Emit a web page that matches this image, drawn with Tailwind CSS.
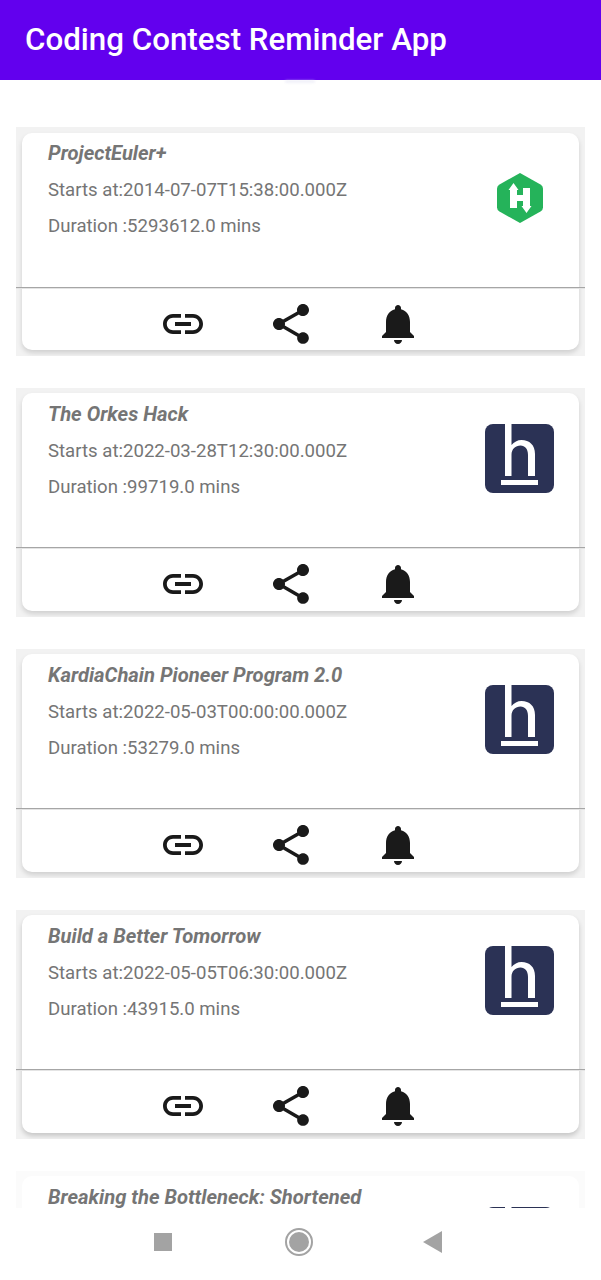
<!DOCTYPE html>
<html>
<head>
    <meta charset="utf-8">
    <title>Coding Contest Reminder App</title>
    <script src="https://cdn.jsdelivr.net/npm/@tailwindcss/browser@4"></script>
</head>

<body>
    <svg class="hidden">
        <symbol id="link" viewBox="0 0 24 24"><path d="M3.9 12c0-1.71 1.39-3.1 3.1-3.1h4V7H7c-2.76 0-5 2.24-5 5s2.24 5 5 5h4v-1.9H7c-1.71 0-3.1-1.39-3.1-3.1zM8 13h8v-2H8v2zm9-6h-4v1.9h4c1.71 0 3.1 1.39 3.1 3.1s-1.39 3.1-3.1 3.1h-4V17h4c2.76 0 5-2.24 5-5s-2.24-5-5-5z"/></symbol>
        <symbol id="share" viewBox="0 0 24 24"><path d="M18 16.08c-.76 0-1.44.3-1.96.77L8.91 12.7c.05-.23.09-.46.09-.7s-.04-.47-.09-.7l7.05-4.11c.54.5 1.25.81 2.04.81 1.66 0 3-1.34 3-3s-1.34-3-3-3-3 1.34-3 3c0 .24.04.47.09.7L8.04 9.81C7.5 9.31 6.79 9 6 9c-1.66 0-3 1.34-3 3s1.34 3 3 3c.79 0 1.5-.31 2.04-.81l7.12 4.16c-.05.21-.08.43-.08.65 0 1.61 1.31 2.92 2.92 2.92 1.61 0 2.92-1.31 2.92-2.92s-1.31-2.92-2.92-2.92z"/></symbol>
        <symbol id="bell" viewBox="0 0 24 24"><path d="M12 22c1.1 0 2-.9 2-2h-4c0 1.1.89 2 2 2zm6-6v-5c0-3.07-1.64-5.64-4.5-6.32V4c0-.83-.67-1.5-1.5-1.5s-1.5.67-1.5 1.5v.68C7.63 5.36 6 7.92 6 11v5l-2 2v1h16v-1l-2-2z"/></symbol>
        <symbol id="hackerearth" viewBox="0 0 69 69">
            <rect width="69" height="69" rx="8" fill="#2b3255"/>
            <path d="M20 0h6.500v21c2.500-3 6-5 10-5 8 0 13.500 5 13.500 14v22h-7V31c0-6-3-9.500-7.500-9.500-5 0-9 3.500-9 9.500v21H20z" fill="#fff"/>
            <rect x="16" y="56" width="37" height="5" fill="#fff"/>
        </symbol>
        <symbol id="hackerrank" viewBox="0 0 46 50">
            <path d="M23 0 43.500 11.500q2.500 1.500 2.500 4V34.500q0 2.500-2.500 4L23 50 2.500 38.500q-2.500-1.500-2.500-4V15.500q0-2.500 2.500-4z" fill="#25b35a"/>
            <path d="M16.500 10 21.500 17H20V22H26V15H33V33H34.500L29.500 40 24.500 33H26V28H20V35H13V17H11.500z" fill="#fff"/>
        </symbol>
    </svg>

    <div class="w-[601px] h-[1280px] flex flex-col bg-white overflow-hidden font-['Roboto',sans-serif]">
        <!-- app bar -->
        <header class="relative z-10 h-[80px] shrink-0 bg-[#6200ee] flex items-center pl-[25px]">
            <h1 class="text-white text-[31.3px] font-medium leading-none">Coding Contest Reminder App</h1>
            <div class="absolute left-[285px] top-[80px] w-[30px] h-[3px] rounded-full bg-[#e4e4f4]/50 blur-[1px]"></div>
        </header>

        <!-- contest list -->
        <main class="flex-1 min-h-0 overflow-hidden flex flex-col gap-[32px] pt-[47px] px-[16px]">

            <div class="shrink-0 bg-[#f2f2f2] p-[6px] overflow-hidden">
                <div class="bg-white rounded-[10px] shadow-[0_3px_5px_rgba(0,0,0,0.14)]">
                    <div class="h-[154px] flex">
                        <div class="flex-1 pl-[26px] pt-[8px] text-[#757575]">
                            <h2 class="text-[20.2px] leading-[24px] font-bold italic mb-[7px]">ProjectEuler+</h2>
                            <p class="text-[18.6px] leading-[36px]">Starts at:2014-07-07T15:38:00.000Z</p>
                            <p class="text-[18.6px] leading-[36px]">Duration :5293612.0 mins</p>
                        </div>
                        <div class="w-[119px] pt-[40px] flex justify-center">
                            <svg class="w-[46px] h-[50px]"><use href="#hackerrank"/></svg>
                        </div>
                    </div>
                    <div class="h-px bg-[#a6a6a6] -mx-[6px] shadow-[0_1px_0_#e4e4e4]"></div>
                    <div class="h-[62px] flex items-center justify-center gap-[59.5px] pr-[20px] pt-[9px] text-[#1a1a1a]">
                        <svg class="w-[48px] h-[48px] fill-current"><use href="#link"/></svg>
                        <svg class="w-[48px] h-[48px] fill-current"><use href="#share"/></svg>
                        <svg class="w-[48px] h-[48px] fill-current"><use href="#bell"/></svg>
                    </div>
                </div>
            </div>

            <div class="shrink-0 bg-[#f2f2f2] px-[6px] pt-[5px] pb-[6px] overflow-hidden">
                <div class="bg-white rounded-[10px] shadow-[0_3px_5px_rgba(0,0,0,0.14)]">
                    <div class="h-[154px] flex">
                        <div class="flex-1 pl-[26px] pt-[9px] text-[#757575]">
                            <h2 class="text-[20.2px] leading-[24px] font-bold italic mb-[7px]">The Orkes Hack</h2>
                            <p class="text-[18.6px] leading-[36px]">Starts at:2022-03-28T12:30:00.000Z</p>
                            <p class="text-[18.6px] leading-[36px]">Duration :99719.0 mins</p>
                        </div>
                        <div class="w-[119px] pt-[31px] flex justify-center">
                            <svg class="w-[69px] h-[69px]"><use href="#hackerearth"/></svg>
                        </div>
                    </div>
                    <div class="h-px bg-[#a6a6a6] -mx-[6px] shadow-[0_1px_0_#e4e4e4]"></div>
                    <div class="h-[63px] flex items-center justify-center gap-[59.5px] pr-[20px] pt-[9px] text-[#1a1a1a]">
                        <svg class="w-[48px] h-[48px] fill-current"><use href="#link"/></svg>
                        <svg class="w-[48px] h-[48px] fill-current"><use href="#share"/></svg>
                        <svg class="w-[48px] h-[48px] fill-current"><use href="#bell"/></svg>
                    </div>
                </div>
            </div>

            <div class="shrink-0 bg-[#f2f2f2] px-[6px] pt-[5px] pb-[6px] overflow-hidden">
                <div class="bg-white rounded-[10px] shadow-[0_3px_5px_rgba(0,0,0,0.14)]">
                    <div class="h-[154px] flex">
                        <div class="flex-1 pl-[26px] pt-[9px] text-[#757575]">
                            <h2 class="text-[20.2px] leading-[24px] font-bold italic mb-[7px]">KardiaChain Pioneer Program 2.0</h2>
                            <p class="text-[18.6px] leading-[36px]">Starts at:2022-05-03T00:00:00.000Z</p>
                            <p class="text-[18.6px] leading-[36px]">Duration :53279.0 mins</p>
                        </div>
                        <div class="w-[119px] pt-[31px] flex justify-center">
                            <svg class="w-[69px] h-[69px]"><use href="#hackerearth"/></svg>
                        </div>
                    </div>
                    <div class="h-px bg-[#a6a6a6] -mx-[6px] shadow-[0_1px_0_#e4e4e4]"></div>
                    <div class="h-[63px] flex items-center justify-center gap-[59.5px] pr-[20px] pt-[9px] text-[#1a1a1a]">
                        <svg class="w-[48px] h-[48px] fill-current"><use href="#link"/></svg>
                        <svg class="w-[48px] h-[48px] fill-current"><use href="#share"/></svg>
                        <svg class="w-[48px] h-[48px] fill-current"><use href="#bell"/></svg>
                    </div>
                </div>
            </div>

            <div class="shrink-0 bg-[#f2f2f2] px-[6px] pt-[5px] pb-[6px] overflow-hidden">
                <div class="bg-white rounded-[10px] shadow-[0_3px_5px_rgba(0,0,0,0.18)]">
                    <div class="h-[154px] flex">
                        <div class="flex-1 pl-[26px] pt-[9px] text-[#757575]">
                            <h2 class="text-[20.2px] leading-[24px] font-bold italic mb-[7px]">Build a Better Tomorrow</h2>
                            <p class="text-[18.6px] leading-[36px]">Starts at:2022-05-05T06:30:00.000Z</p>
                            <p class="text-[18.6px] leading-[36px]">Duration :43915.0 mins</p>
                        </div>
                        <div class="w-[119px] pt-[31px] flex justify-center">
                            <svg class="w-[69px] h-[69px]"><use href="#hackerearth"/></svg>
                        </div>
                    </div>
                    <div class="h-px bg-[#a6a6a6] -mx-[6px] shadow-[0_1px_0_#e4e4e4]"></div>
                    <div class="h-[63px] flex items-center justify-center gap-[59.5px] pr-[20px] pt-[9px] text-[#1a1a1a]">
                        <svg class="w-[48px] h-[48px] fill-current"><use href="#link"/></svg>
                        <svg class="w-[48px] h-[48px] fill-current"><use href="#share"/></svg>
                        <svg class="w-[48px] h-[48px] fill-current"><use href="#bell"/></svg>
                    </div>
                </div>
            </div>

            <div class="shrink-0 bg-[#fbfbfb] px-[6px] pt-[5px] pb-[6px]">
                <div class="bg-white rounded-[10px]">
                    <div class="h-[154px] flex">
                        <div class="flex-1 pl-[26px] pt-[9px] text-[#757575]">
                            <h2 class="text-[20.2px] leading-[24px] font-bold italic mb-[7px]">Breaking the Bottleneck: Shortened</h2>
                        </div>
                        <div class="w-[119px] pt-[31px] flex justify-center">
                            <svg class="w-[69px] h-[69px]"><use href="#hackerearth"/></svg>
                        </div>
                    </div>
                </div>
            </div>
        </main>

        <!-- android nav bar -->
        <nav class="h-[72px] shrink-0 bg-white flex items-center pb-[4px]">
            <div class="w-[154px] shrink-0"></div>
            <div class="w-[18px] h-[18px] bg-[#a3a3a3] shrink-0"></div>
            <div class="w-[113px] shrink-0"></div>
            <div class="w-[28px] h-[28px] rounded-full border-[2px] border-[#a3a3a3] shrink-0 flex items-center justify-center">
                <div class="w-[20px] h-[20px] rounded-full bg-[#a3a3a3]"></div>
            </div>
            <div class="w-[110px] shrink-0"></div>
            <svg class="w-[20px] h-[24px] fill-[#a3a3a3] shrink-0" viewBox="0 0 20 24"><path d="M19 1v22L0 12z"/></svg>
        </nav>
    </div>
</body>
</html>
